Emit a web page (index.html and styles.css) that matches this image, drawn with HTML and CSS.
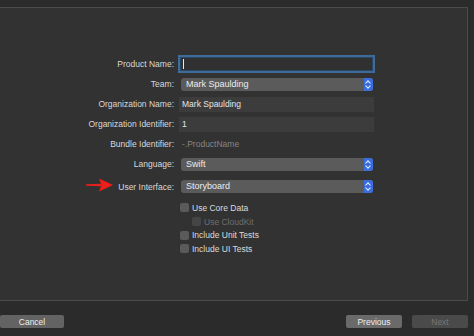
FILE: index.html
```html
<!DOCTYPE html>
<html lang="en">
<head>
  <meta charset="UTF-8">
  <title>Choose options for your new project</title>
  <link rel="stylesheet" href="styles.css">
</head>
<body>

<div class="panel">
  <div class="form">
    <label class="label">Product Name:</label>
    <div class="field focused"><span class="cursor"></span></div>

    <label class="label">Team:</label>
    <div class="popup">Mark Spaulding<span class="stepper"></span></div>

    <label class="label">Organization Name:</label>
    <div class="field">Mark Spaulding</div>

    <label class="label">Organization Identifier:</label>
    <div class="field">1</div>

    <label class="label">Bundle Identifier:</label>
    <div class="static">-.ProductName</div>

    <label class="label">Language:</label>
    <div class="popup">Swift<span class="stepper"></span></div>

    <label class="label ui-label">User Interface:</label>
    <div class="popup ui-popup">Storyboard<span class="stepper"></span></div>

    <div class="options">
      <div class="check"><span class="box"></span>Use Core Data</div>
      <div class="check sub disabled"><span class="box"></span>Use CloudKit</div>
      <div class="check"><span class="box"></span>Include Unit Tests</div>
      <div class="check"><span class="box"></span>Include UI Tests</div>
    </div>
  </div>

  <!-- annotation arrow -->
  <svg class="arrow" width="28" height="16" viewBox="0 0 28 16">
    <path d="M0 7.3 L15 6.8 L15 9.2 L0 8.7 Z" fill="#e8201c"/>
    <path d="M13 1.5 L27 8 L13 14.5 L15.5 8 Z" fill="#f01e1a"/>
  </svg>
</div>

<div class="footer">
  <button class="btn cancel">Cancel</button>
  <div class="nav">
    <button class="btn">Previous</button>
    <button class="btn off">Next</button>
  </div>
</div>

</body>
</html>
```

FILE: styles.css
```css
* { margin: 0; padding: 0; box-sizing: border-box; }
html, body {
  background: #2b2b2c;
  font-family: 'Liberation Sans', Arial, sans-serif;
  font-size: 8.5px;
  color: #dedede;
  height: 100%;
  overflow: hidden;
}

.panel {
  position: relative;
  margin: 7px 6px 0 0;
  height: 294px;
  border: 1px solid #4b4b4c;
  border-left: none;
  background: #323233;
  padding-top: 46px;
}

.form {
  display: grid;
  grid-template-columns: 174px 197px;
  grid-auto-rows: 20px;
  column-gap: 4px;
  align-items: center;
}

.label {
  text-align: right;
  color: #d9d9d9;
}

.field {
  height: 15px;
  margin: 0 1px;
  padding-left: 3px;
  background: #3c3c3d;
  line-height: 15px;
  color: #e4e4e4;
}

.field.focused {
  height: 18px;
  margin: 0;
  background: #303031;
  border: 2px solid #3f6b98;
  box-shadow: inset 0 0 0 1px #2a4566;
  padding-left: 3px;
  display: flex;
  align-items: center;
}

.cursor {
  width: 1px;
  height: 10px;
  background: #e8e8e8;
}

.static {
  padding-left: 4px;
  color: #858585;
}

.popup {
  position: relative;
  height: 13px;
  margin: 0 2px 0 3px;
  padding-left: 5px;
  background: #5b5b5c;
  border-radius: 3px;
  line-height: 13px;
  color: #ececec;
  font-size: 9px;
}

.stepper {
  position: absolute;
  right: 0;
  top: 0;
  width: 9px;
  height: 13px;
  border-radius: 0 3px 3px 0;
  background: #3a6ee0;
}

.stepper::before, .stepper::after {
  content: "";
  position: absolute;
  left: 2px;
  width: 3px;
  height: 3px;
  border: solid #e6eeff;
  border-width: 1px 0 0 1px;
}
.stepper::before { top: 3px; transform: rotate(45deg); }
.stepper::after { top: 6px; transform: rotate(225deg); }

.ui-label, .ui-popup { margin-top: 5px; }

.options {
  grid-column: 2;
  grid-row: span 3;
  align-self: start;
  margin-top: 7px;
  padding-left: 2px;
}

.check {
  display: flex;
  align-items: center;
  gap: 3px;
  height: 13.7px;
  color: #dcdcdc;
}

.box {
  width: 9px;
  height: 9px;
  border-radius: 2px;
  background: #5a5a5b;
}

.check.sub { padding-left: 12px; }
.check.disabled { color: #6e6e6e; }
.check.disabled .box { background: #454546; }

.arrow {
  position: absolute;
  left: 86px;
  top: 169px;
}

.footer {
  display: flex;
  justify-content: space-between;
  padding: 14px 6px 0 0;
}

.nav {
  display: flex;
  gap: 10px;
}

.btn {
  width: 56px;
  height: 13px;
  border: none;
  border-radius: 2px;
  background: #6a6a6b;
  color: #ededed;
  font-family: 'Liberation Sans', Arial, sans-serif;
  font-size: 8.5px;
}

.btn.cancel {
  width: 64px;
  background: #636364;
}

.btn.off {
  background: #4a4a4b;
  color: #767676;
}
```
